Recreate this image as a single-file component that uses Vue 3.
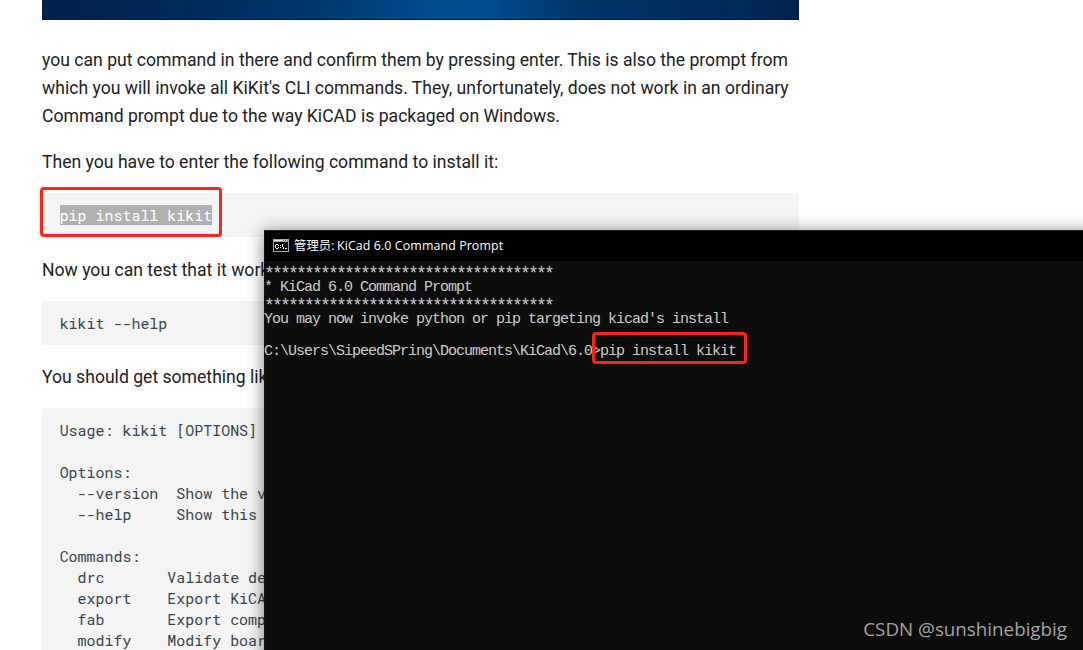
<template>
  <div class="screen">
    <main class="article">
      <div class="banner"></div>
      <p class="intro">
        <span v-for="line in intro" :key="line" class="line">{{ line }}</span>
      </p>
      <p>Then you have to enter the following command to install it:</p>
      <pre><code class="selected">pip install kikit</code></pre>
      <p>Now you can test that it works:</p>
      <pre><code>kikit --help</code></pre>
      <p>You should get something like this:</p>
      <pre><code>{{ usage }}</code></pre>
    </main>

    <section class="console">
      <header class="title-bar">
        <svg class="cmd-icon" width="16" height="13" viewBox="0 0 16 13" shape-rendering="crispEdges">
          <rect width="16" height="13" fill="#a4a8ac" />
          <rect x="1" y="1" width="14" height="1" fill="#dfe3e8" />
          <rect x="10" y="1" width="1" height="1" fill="#4c6c8c" />
          <rect x="12" y="1" width="1" height="1" fill="#4c6c8c" />
          <rect x="14" y="1" width="1" height="1" fill="#4c6c8c" />
          <rect x="1" y="3" width="14" height="9" fill="#000" />
          <path
            d="M3 5.5h2M2.5 6v3M3 9.5h2M5 6.5h1M5 8.5h1M7 6.5h1M7 8.5h1M9.5 5v3M10.5 8v2M12 9.5h2"
            fill="none"
            stroke="#fff"
          />
        </svg>
        <span class="title-cn">管理员:</span>
        <span class="title">KiCad 6.0 Command Prompt</span>
      </header>
      <div class="output">
        <div class="row stars">{{ stars }}</div>
        <div class="row">* KiCad 6.0 Command Prompt</div>
        <div class="row stars">{{ stars }}</div>
        <div class="row">You may now invoke python or pip targeting kicad's install</div>
        <div class="row"></div>
        <div class="row">C:\Users\SipeedSPring\Documents\KiCad\6.0>pip install kikit</div>
      </div>
    </section>

    <div class="mark mark-doc"></div>
    <div class="mark mark-console"></div>
    <div class="watermark">CSDN @sunshinebigbig</div>
  </div>
</template>

<script setup>
const stars = '*'.repeat(36);

const intro = [
  'you can put command in there and confirm them by pressing enter. This is also the prompt from',
  "which you will invoke all KiKit's CLI commands. They, unfortunately, does not work in an ordinary",
  'Command prompt due to the way KiCAD is packaged on Windows.',
];

const usage = `Usage: kikit [OPTIONS] COMMAND [ARGS]...

Options:
  --version  Show the version and exit.
  --help     Show this message and exit.

Commands:
  drc       Validate design rules of the board
  export    Export KiCAD boards
  fab       Export complete manufacturing data
  modify    Modify board items`;
</script>

<style>
body {
  background: #fff;
  overflow: hidden;
}
</style>

<style scoped>
.screen {
  position: relative;
  width: 1083px;
  height: 650px;
  overflow: hidden;
  background: #fff;
}

.article {
  width: 757px;
  margin-left: 42px;
  color: #212121;
  font: 17.6px/28.16px Roboto, sans-serif;
}

.banner {
  height: 20px;
  margin-bottom: 25.5px;
  background: linear-gradient(90deg, #00214a 0%, #002957 18%, #003a70 38%, #004b8d 52%, #004c90 58%, #003467 72%, #002b59 90%, #00234c 100%);
  border-bottom: 1px solid #00204a;
  box-sizing: border-box;
}

.article p {
  margin: 0 0 16.9px;
  padding-top: 0.7px;
  white-space: nowrap;
}

.article p.intro {
  margin-bottom: 17.3px;
  padding-top: 0.3px;
}

.line {
  display: block;
}

.article pre {
  margin: 0 0 17.6px;
  padding: 12px 17.65px 10.98px;
  background: #f4f4f4;
  border-radius: 2px;
  color: #36464e;
  font: 14.96px/21px "Roboto Mono", "DejaVu Sans Mono", monospace;
}

.article code {
  display: block;
  font: inherit;
}

.article code.selected {
  width: 152.5px;
  height: 20px;
  margin-bottom: 1px;
  background: #b0b0b0;
  color: #fff;
}

.console {
  position: absolute;
  top: 230px;
  left: 264px;
  width: 900px;
  height: 500px;
  background: #0c0c0c;
  border-top: 1px solid #222;
  border-left: 1px solid #111;
  box-shadow: 0 2px 16px rgba(0, 0, 0, 0.5);
  box-sizing: border-box;
}

.title-bar {
  display: flex;
  align-items: center;
  height: 30px;
  padding-left: 8px;
  background: #000;
  color: #fff;
  font: 12.4px/30px "Open Sans", "Noto Sans CJK SC", sans-serif;
}

.cmd-icon {
  margin-bottom: 1px;
}

.title-cn {
  width: 43px;
  margin-left: 5px;
}

.title {
  letter-spacing: 0.1px;
}

.output {
  padding-top: 3px;
  color: #ccc;
  font: 15px/16px "Liberation Mono", "Courier New", monospace;
  letter-spacing: -1px;
}

.row {
  height: 16px;
  margin-left: -1px;
  white-space: pre;
}

.stars {
  box-sizing: border-box;
  padding-top: 2px;
  font-size: 18px;
  letter-spacing: -2.8px;
}

.mark {
  position: absolute;
  box-sizing: border-box;
  border: 3px solid #ff2416;
  border-radius: 4px;
}

.mark-doc {
  top: 187px;
  left: 40px;
  width: 182px;
  height: 50px;
}

.mark-console {
  top: 332px;
  left: 592px;
  width: 155px;
  height: 32px;
}

.watermark {
  position: absolute;
  right: 16px;
  bottom: 9px;
  color: #a3a3a3;
  font: 18.8px/24px "Open Sans", Arial, sans-serif;
}
</style>
